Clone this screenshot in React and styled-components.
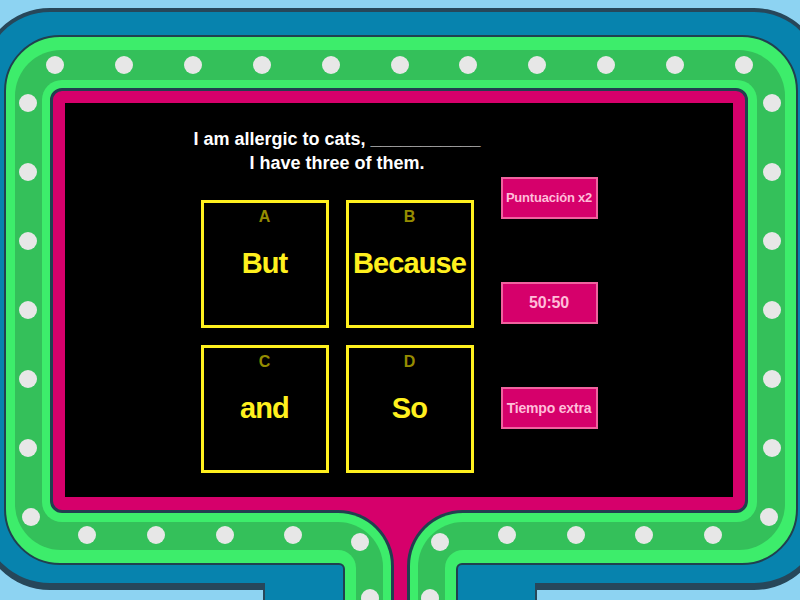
import styled, { createGlobalStyle } from 'styled-components';

const GlobalStyle = createGlobalStyle`
  html, body {
    margin: 0;
    padding: 0;
  }
  body {
    background: #8dd3f2;
    overflow: hidden;
    font-family: "Liberation Sans", Arial, sans-serif;
  }
  * {
    box-sizing: border-box;
  }
`;

const DARK = '#21404f';
const BLUE = '#0783ae';
const BRIGHT = '#3ded6b';
const MID = '#34c05a';
const PINK = '#d6006b';

const Stage = styled.div`
  position: relative;
  width: 800px;
  height: 600px;
  overflow: hidden;
  background: #8dd3f2;
  padding-top: 8px;
`;

const Outer = styled.div`
  width: 844px;
  margin-left: -20px;
  background: ${BLUE};
  border: 4px solid #27475a;
  border-bottom-width: 7px;
  border-radius: 70px;
  padding: 23px 22px 18px 20px;
`;

const GreenRing = styled.div`
  background: ${BRIGHT};
  border: 2px solid ${DARK};
  border-radius: 56px;
  padding: 13px 11px 13px 9px;
`;

const MidRing = styled.div`
  background: ${MID};
  border-radius: 46px;
  padding: 30px 28px 28px 27px;
`;

const InnerRing = styled.div`
  background: ${BRIGHT};
  border-radius: 20px;
  padding: 8px 9px 9px 8px;
`;

const PinkFrame = styled.div`
  background: ${PINK};
  border: 3px solid ${DARK};
  border-radius: 12px;
  padding: 12px 12px 13px 12px;
`;

const Screen = styled.div`
  height: 394px;
  background: #000;
  display: flex;
  align-items: center;
  justify-content: center;
  gap: 27px;
`;

const QuizColumn = styled.div`
  width: 273px;
  display: flex;
  flex-direction: column;
  align-items: center;
`;

const Question = styled.div`
  color: #fff;
  font-weight: 700;
  font-size: 18px;
  line-height: 24px;
  text-align: center;
  white-space: nowrap;
  margin-bottom: 25px;
`;

const AnswerGrid = styled.div`
  display: grid;
  grid-template-columns: 128px 128px;
  grid-auto-rows: 128px;
  gap: 17px;
`;

const AnswerBox = styled.div`
  border: 3px solid #fff01e;
  display: flex;
  flex-direction: column;
  align-items: center;
`;

const Letter = styled.div`
  margin-top: 4px;
  line-height: 20px;
  font-size: 16px;
  font-weight: 700;
  color: #958c00;
`;

const AnswerText = styled.div`
  flex: 1;
  display: flex;
  align-items: center;
  justify-content: center;
  padding-bottom: 26px;
  font-size: 29px;
  font-weight: 700;
  letter-spacing: -0.9px;
  color: #fff01e;
`;

const PowerColumn = styled.div`
  display: flex;
  flex-direction: column;
  gap: 63px;
  margin-top: 5px;
`;

const PowerButton = styled.div`
  width: 97px;
  height: 42px;
  display: flex;
  align-items: center;
  justify-content: center;
  background: ${PINK};
  border: 2px solid #f0629f;
  color: #ffbdd9;
  font-weight: 700;
  font-size: ${(p) => p.$size}px;
  letter-spacing: -0.2px;
  white-space: nowrap;
`;

const Stem = styled.div`
  position: absolute;
  left: 330px;
  top: 500px;
  width: 140px;
  height: 100px;
  background: ${PINK};
`;

const Leg = styled.div`
  position: absolute;
  top: 510px;
  height: 90px;
  left: ${(p) => (p.$side === 'left' ? 263 : 407)}px;
  width: ${(p) => (p.$side === 'left' ? 131 : 130)}px;
  display: flex;
`;

const LegLayer = styled.div`
  flex: 1;
  display: flex;
  background: ${(p) => p.$bg};
  padding-top: ${(p) => p.$top}px;
  ${(p) => (p.$side === 'left' ? 'padding-right' : 'padding-left')}: ${(p) => p.$edge}px;
  ${(p) => (p.$side === 'left' ? 'border-top-right-radius' : 'border-top-left-radius')}: ${(p) => p.$radius}px;
`;

const LegInside = styled.div`
  position: relative;
  flex: 1;
  background: ${BLUE};
  ${(p) => (p.$side === 'left' ? 'border-top-right-radius' : 'border-top-left-radius')}: 4px;

  &::before {
    content: '';
    position: absolute;
    top: 18px;
    bottom: 0;
    ${(p) => (p.$side === 'left' ? 'left: 0;' : 'right: 0;')}
    width: 2px;
    background: #27475a;
  }
`;

const Lights = styled.div`
  position: absolute;
  inset: 0;
  pointer-events: none;
`;

const Bulb = styled.span`
  position: absolute;
  width: 18px;
  height: 18px;
  border-radius: 50%;
  background: #e7e7e7;
  left: ${(p) => p.$x - 9}px;
  top: ${(p) => p.$y - 9}px;
`;

const legLayers = [
  { bg: DARK, top: 3, edge: 3, radius: 56 },
  { bg: BRIGHT, top: 9, edge: 8, radius: 53 },
  { bg: MID, top: 28, edge: 27, radius: 45 },
  { bg: BRIGHT, top: 13, edge: 11, radius: 18 },
  { bg: DARK, top: 2, edge: 2, radius: 6 },
];

function StandLeg({ side }) {
  const inner = <LegInside $side={side} />;
  const wrapped = legLayers.reduceRight(
    (child, l) => (
      <LegLayer $side={side} $bg={l.bg} $top={l.top} $edge={l.edge} $radius={l.radius}>
        {child}
      </LegLayer>
    ),
    inner
  );
  return <Leg $side={side}>{wrapped}</Leg>;
}

function bulbSpots() {
  const spots = [];
  for (let i = 0; i < 11; i++) spots.push([55 + i * 68.9, 65]);
  for (let i = 0; i < 7; i++) {
    spots.push([i === 6 ? 31 : 28, 103 + i * 69]);
    spots.push([i === 6 ? 769 : 772, 103 + i * 69]);
  }
  [87, 156, 225, 293, 507, 576, 644, 713].forEach((x) => spots.push([x, 535]));
  spots.push([360, 542], [440, 542], [370, 598], [430, 598]);
  return spots;
}

const answers = [
  { letter: 'A', text: 'But' },
  { letter: 'B', text: 'Because' },
  { letter: 'C', text: 'and' },
  { letter: 'D', text: 'So' },
];

const powers = [
  { label: 'Puntuación x2', size: 13 },
  { label: '50:50', size: 16 },
  { label: 'Tiempo extra', size: 14 },
];

export default function App() {
  return (
    <Stage>
      <GlobalStyle />
      <Outer>
        <GreenRing>
          <MidRing>
            <InnerRing>
              <PinkFrame>
                <Screen>
                  <QuizColumn>
                    <Question>
                      I am allergic to cats, ___________
                      <br />
                      I have three of them.
                    </Question>
                    <AnswerGrid>
                      {answers.map((a) => (
                        <AnswerBox key={a.letter}>
                          <Letter>{a.letter}</Letter>
                          <AnswerText>{a.text}</AnswerText>
                        </AnswerBox>
                      ))}
                    </AnswerGrid>
                  </QuizColumn>
                  <PowerColumn>
                    {powers.map((p) => (
                      <PowerButton key={p.label} $size={p.size}>
                        {p.label}
                      </PowerButton>
                    ))}
                  </PowerColumn>
                </Screen>
              </PinkFrame>
            </InnerRing>
          </MidRing>
        </GreenRing>
      </Outer>
      <Stem />
      <StandLeg side="left" />
      <StandLeg side="right" />
      <Lights>
        {bulbSpots().map(([x, y], i) => (
          <Bulb key={i} $x={x} $y={y} />
        ))}
      </Lights>
    </Stage>
  );
}
